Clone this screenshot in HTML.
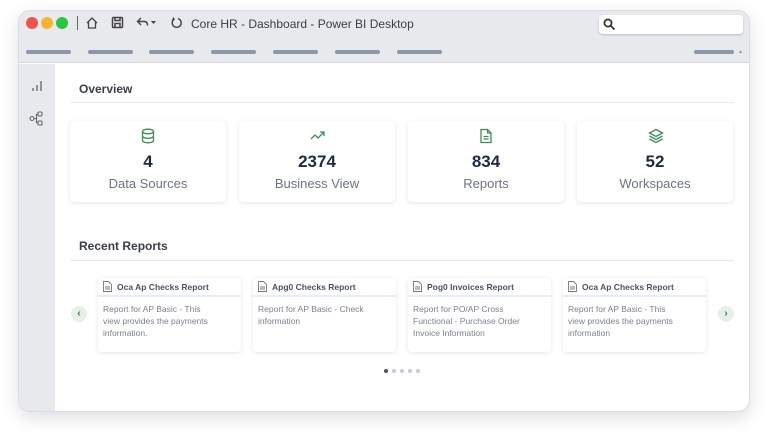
<!DOCTYPE html>
<html><head><meta charset="utf-8"><style>
*{box-sizing:border-box;margin:0;padding:0}
body{width:768px;height:439px;background:#fff;font-family:"Liberation Sans",sans-serif;position:relative;overflow:hidden}
.win{position:absolute;left:18px;top:10px;width:732px;height:402px;border-radius:12px;background:#fff;box-shadow:0 6px 18px rgba(0,0,0,.13);overflow:hidden;border:1px solid #d9dce2}
.tb{position:absolute;left:0;top:0;width:100%;height:52px;background:#e7e9ed;border-bottom:1px solid #d3d6dc}
.dot{position:absolute;top:6px;width:12px;height:12px;border-radius:50%}
.title{position:absolute;left:172px;top:6px;font-size:12px;color:#3a3f48}
.search{position:absolute;left:580px;top:4px;width:144px;height:19px;background:#fff;border-radius:4px;box-shadow:0 1px 2px rgba(0,0,0,.2)}
.bar{position:absolute;top:39px;height:4px;width:45px;background:#8c97aa;border-radius:2px}
.side{position:absolute;left:0;top:53px;width:36px;bottom:0;background:#e7e9ed}
.h{position:absolute;font-size:12px;font-weight:bold;color:#3a3f48}
.line{position:absolute;height:1px;background:#e6e8ec}
.card{position:absolute;top:121px;width:156px;height:81px;background:#fff;border-radius:4px;box-shadow:0 1px 4px rgba(0,0,0,.1);text-align:center}
.card svg{position:absolute;left:71px;top:7px}
.num{position:absolute;top:31px;width:100%;font-size:17px;font-weight:bold;color:#1f2a44}
.lbl{position:absolute;top:55px;width:100%;font-size:13px;color:#6b7385}
.rc{position:absolute;top:278px;width:143px;height:74px;background:#fff;border-radius:4px;box-shadow:0 1px 4px rgba(0,0,0,.1)}
.rc .t{height:19px;border-bottom:2px solid #e8edf5;font-size:8.5px;font-weight:bold;color:#4a5263;padding:4px 0 0 19px;position:relative}
.rc .t svg{position:absolute;left:5px;top:3px}
.rc .d{font-size:8.5px;color:#7a8190;padding:6px 24px 0 5px;line-height:12px}
.arr{position:absolute;top:306px;width:16px;height:16px;border-radius:50%;background:#e6efe8;color:#2e7d46;font-size:10px;text-align:center;line-height:16px;font-weight:bold}
.pd{position:absolute;top:369px;width:4px;height:4px;border-radius:50%;background:#c6ccd8}
</style></head><body>
<div class="win">
<div class="tb">
<div class="dot" style="left:7px;background:#f0524f"></div>
<div class="dot" style="left:22px;background:#f5b52f"></div>
<div class="dot" style="left:37px;background:#2dc443"></div>
<div style="position:absolute;left:58px;top:5px;width:1px;height:14px;background:#666"></div>
<svg style="position:absolute;left:66px;top:5px" width="14" height="14" viewBox="0 0 14 14" fill="none" stroke="#444" stroke-width="1.3"><path d="M2 7L7 2l5 5M3.5 6v6h7V6"/></svg>
<svg style="position:absolute;left:92px;top:5px" width="13" height="13" viewBox="0 0 13 13" fill="none" stroke="#444" stroke-width="1.5"><rect x="1.5" y="1.5" width="10" height="10" rx="1"/><path d="M4 1.5v3h5v-3M4 11.5v-4h5v4"/></svg>
<svg style="position:absolute;left:117px;top:5px" width="22" height="13" viewBox="0 0 22 13" fill="none" stroke="#444" stroke-width="1.4"><path d="M5 2L1.5 5.5 5 9M1.5 5.5h7c2 0 3 1.5 3 4"/><path d="M15 5h5l-2.5 3z" fill="#444" stroke="none"/></svg>
<svg style="position:absolute;left:151px;top:5px" width="13" height="13" viewBox="0 0 13 13" fill="none" stroke="#444" stroke-width="1.4"><path d="M4 3.2A4.5 4.5 0 1 0 8 2.5"/><path d="M3 1.5l1 2-2 .8"/></svg>
<div class="title">Core HR - Dashboard - Power BI Desktop</div>
<div class="search"><svg style="position:absolute;left:4px;top:3px" width="13" height="13" viewBox="0 0 13 13" fill="none" stroke="#333" stroke-width="1.8"><circle cx="5" cy="5" r="3.6"/><path d="M7.7 7.7l3.8 3.8"/></svg></div>
<div class="bar" style="left:7px"></div><div class="bar" style="left:69px"></div><div class="bar" style="left:130px"></div><div class="bar" style="left:192px"></div><div class="bar" style="left:254px"></div><div class="bar" style="left:316px"></div><div class="bar" style="left:378px"></div>
<div class="bar" style="left:675px;width:40px"></div>
<div style="position:absolute;left:719px;top:38px;font-size:5px;color:#8c97aa">▲</div>
</div>
<div class="side">
<svg style="position:absolute;left:11px;top:15px" width="14" height="14" viewBox="0 0 14 14" stroke="#666" stroke-width="1.3"><path d="M3 12V9M7 12V6M11 12V2"/></svg>
<svg style="position:absolute;left:10px;top:47px" width="15" height="15" viewBox="0 0 15 15" fill="none" stroke="#666" stroke-width="1.1"><circle cx="3" cy="7.5" r="2"/><rect x="9" y="1" width="4" height="4" rx="1"/><rect x="9" y="10" width="4" height="4" rx="1"/><path d="M5 7.5h2.5M7.5 3v9M7.5 3H9M7.5 12H9"/></svg>
</div>
</div>
<div class="h" style="left:79px;top:82px">Overview</div>
<div class="line" style="left:70px;top:102px;width:664px"></div>
<div class="card" style="left:70px"><svg width="14" height="16" viewBox="0 0 14 16" fill="none" stroke="#3e8a57" stroke-width="1.3"><ellipse cx="7" cy="3.5" rx="5.5" ry="2.3"/><path d="M1.5 3.5v9c0 1.3 2.5 2.3 5.5 2.3s5.5-1 5.5-2.3v-9M1.5 8c0 1.3 2.5 2.3 5.5 2.3s5.5-1 5.5-2.3"/></svg><div class="num">4</div><div class="lbl">Data Sources</div></div>
<div class="card" style="left:239px"><svg width="16" height="16" viewBox="0 0 16 16" fill="none" stroke="#3e8a57" stroke-width="1.3"><path d="M1 11l4-4 3 3 6-6M10 4h4v4"/></svg><div class="num">2374</div><div class="lbl">Business View</div></div>
<div class="card" style="left:408px"><svg width="14" height="16" viewBox="0 0 14 16" fill="none" stroke="#3e8a57" stroke-width="1.3"><path d="M2 1.5h6.5L12 5v9.5H2z M8.5 1.5V5H12M4.5 8.5h5M4.5 11h5"/></svg><div class="num">834</div><div class="lbl">Reports</div></div>
<div class="card" style="left:577px"><svg width="16" height="16" viewBox="0 0 16 16" fill="none" stroke="#3e8a57" stroke-width="1.3"><path d="M8 1.5l6.5 3.5L8 8.5 1.5 5zM1.5 8L8 11.5 14.5 8M1.5 11L8 14.5 14.5 11"/></svg><div class="num">52</div><div class="lbl">Workspaces</div></div>
<div class="h" style="left:79px;top:239px">Recent Reports</div>
<div class="line" style="left:70px;top:260px;width:664px"></div>
<div class="arr" style="left:71px">‹</div>
<div class="arr" style="left:718px">›</div>
<div class="rc" style="left:98px"><div class="t"><svg width="9" height="11" viewBox="0 0 9 11" fill="none" stroke="#777" stroke-width=".9"><path d="M.5.5h5l3 3v7h-8z M2 6h5M2 8h5"/></svg>Oca Ap Checks Report</div><div class="d">Report for AP Basic - This view provides the payments information.</div></div>
<div class="rc" style="left:253px"><div class="t"><svg width="9" height="11" viewBox="0 0 9 11" fill="none" stroke="#777" stroke-width=".9"><path d="M.5.5h5l3 3v7h-8z M2 6h5M2 8h5"/></svg>Apg0 Checks Report</div><div class="d">Report for AP Basic - Check information</div></div>
<div class="rc" style="left:408px"><div class="t"><svg width="9" height="11" viewBox="0 0 9 11" fill="none" stroke="#777" stroke-width=".9"><path d="M.5.5h5l3 3v7h-8z M2 6h5M2 8h5"/></svg>Pog0 Invoices Report</div><div class="d">Report for PO/AP Cross Functional - Purchase Order Invoice Information</div></div>
<div class="rc" style="left:563px"><div class="t"><svg width="9" height="11" viewBox="0 0 9 11" fill="none" stroke="#777" stroke-width=".9"><path d="M.5.5h5l3 3v7h-8z M2 6h5M2 8h5"/></svg>Oca Ap Checks Report</div><div class="d">Report for AP Basic - This view provides the payments information</div></div>
<div class="pd" style="left:384px;background:#4a5263"></div><div class="pd" style="left:392px"></div><div class="pd" style="left:400px"></div><div class="pd" style="left:408px"></div><div class="pd" style="left:416px"></div>
</body></html>
